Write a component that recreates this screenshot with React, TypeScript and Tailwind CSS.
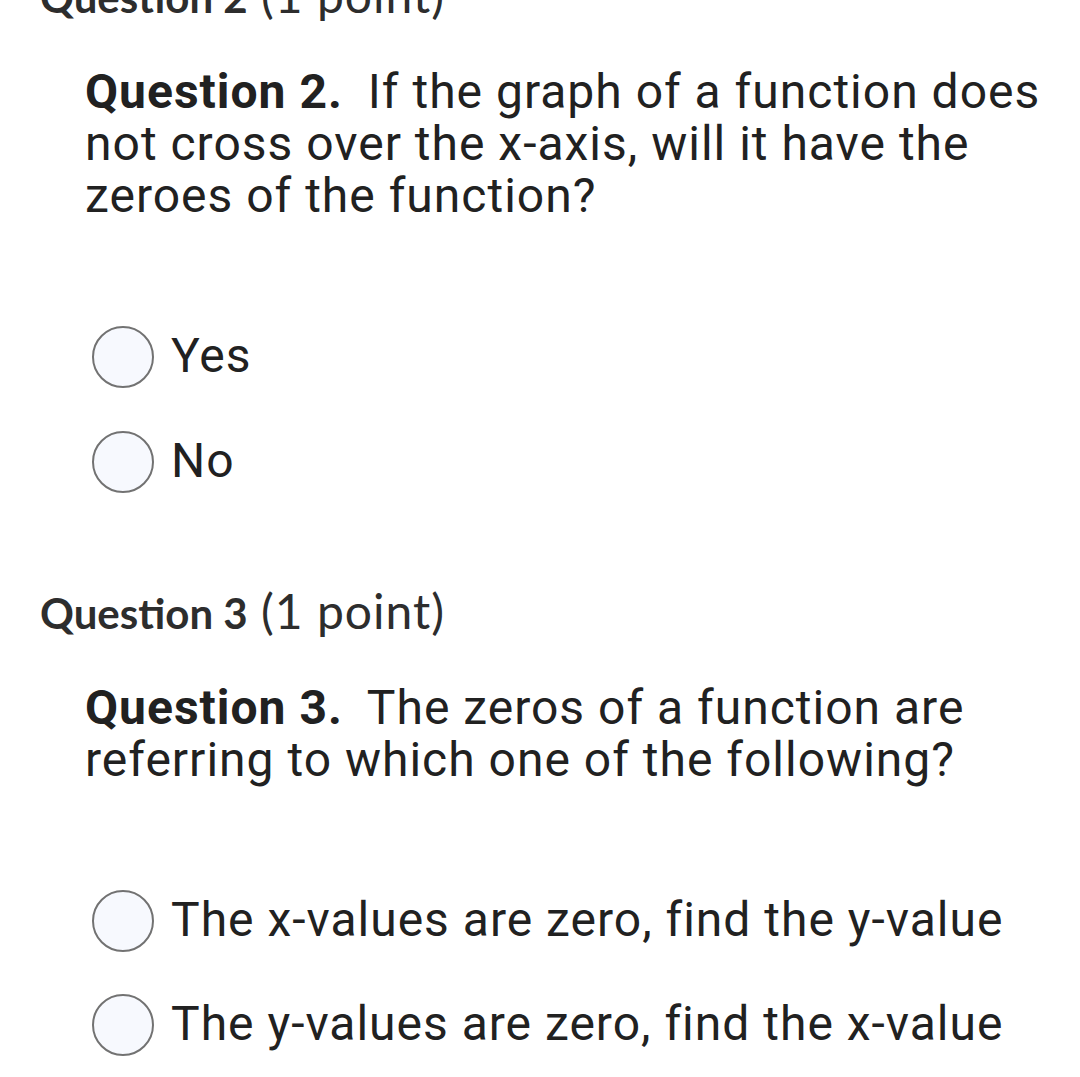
import React from "react";

const roboto = { fontFamily: "Roboto, 'Liberation Sans', sans-serif" };

function Radio({ label }: { label: string }) {
  return (
    <div className="flex items-center h-[62px] ml-[7px]">
      <div className="w-[62px] h-[62px] rounded-full border-2 border-[#727272] bg-[#f7f9fe] shrink-0" />
      <span
        className="ml-[17px] -mt-[3px] text-[48px] leading-[52px] tracking-[1px] text-[#212121] whitespace-nowrap"
        style={{ ...roboto, fontVariantLigatures: "none" }}
      >
        {label}
      </span>
    </div>
  );
}

function Header({ n }: { n: number }) {
  return (
    <div
      className="h-[50px] leading-[50px] text-[#2d2d2d] whitespace-nowrap"
      style={{ fontFamily: "Lato, 'Liberation Sans', sans-serif" }}
    >
      <span className="font-bold text-[42px]">Question {n}</span>
      <span className="text-[48px] tracking-[1px]"> (1 point)</span>
    </div>
  );
}

function QText({ bold, children }: { bold: string; children: React.ReactNode }) {
  return (
    <p
      className="mt-[46px] text-[48px] leading-[52px] tracking-[1px] text-[#212121]"
      style={{ ...roboto, fontVariantLigatures: "none" }}
    >
      <span className="font-bold">{bold}</span>
      <span className="inline-block w-[12px]" /> {children}
    </p>
  );
}

export default function App() {
  return (
    <div className="w-[1080px] h-[1077px] bg-white overflow-hidden">
      <div className="pl-[40px] -mt-[30px]">
        <Header n={2} />
        <div className="pl-[45px] pr-[35px]">
          <QText bold="Question 2.">
            If the graph of a function does not cross over the x-axis, will it have the zeroes of the function?
          </QText>
          <div className="mt-[104px] flex flex-col gap-[43px]">
            <Radio label="Yes" />
            <Radio label="No" />
          </div>
        </div>
        <div className="mt-[93px]">
          <Header n={3} />
        </div>
        <div className="pl-[45px] pr-[35px]">
          <QText bold="Question 3.">
            The zeros of a function are referring to which one of the following?
          </QText>
          <div className="mt-[104px] flex flex-col gap-[42px]">
            <Radio label="The x-values are zero, find the y-value" />
            <Radio label="The y-values are zero, find the x-value" />
          </div>
        </div>
      </div>
    </div>
  );
}
